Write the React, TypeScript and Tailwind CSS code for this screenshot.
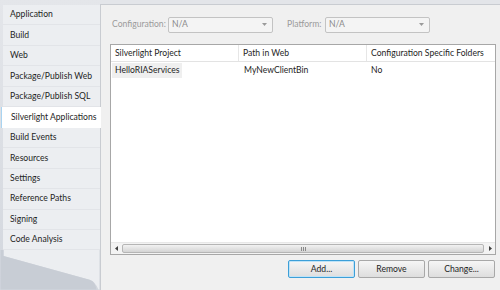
import React from "react";

const tabs = [
  "Application",
  "Build",
  "Web",
  "Package/Publish Web",
  "Package/Publish SQL",
  "Silverlight Applications",
  "Build Events",
  "Resources",
  "Settings",
  "Reference Paths",
  "Signing",
  "Code Analysis",
];

function Combo({ width }: { width: string }) {
  return (
    <div
      className={`${width} h-[16px] border border-[#c3c3c3] rounded-[2px] bg-[#f4f4f4] flex items-center justify-between pl-[3px] pr-[5px]`}
    >
      <span className="text-[#8a8a8a]">N/A</span>
      <svg width="5" height="3" viewBox="0 0 5 3">
        <path d="M0 0h5L2.5 3z" fill="#9a9a9a" />
      </svg>
    </div>
  );
}

function Button({ label, focused }: { label: string; focused?: boolean }) {
  return (
    <div
      className={`w-[67px] h-[18px] rounded-[2px] border flex items-center justify-center bg-gradient-to-b from-[#f6f6f6] to-[#dedede] text-[#1e1e1e] ${
        focused ? "border-[#3c9fd8] shadow-[inset_0_0_0_1px_#bfe3f7]" : "border-[#a8a8a8]"
      }`}
    >
      {label}
    </div>
  );
}

export default function App() {
  return (
    <div
      className="w-[500px] h-[290px] flex bg-[#e3e5e9] overflow-hidden text-[8.6px] leading-none"
      style={{ fontFamily: 'Lato, "Noto Sans", sans-serif' }}
    >
      {/* Side tabs */}
      <div className="w-[100px] flex flex-col pt-[5px] bg-gradient-to-b from-[#e4e6ea] to-[#d3d7de]">
        {tabs.map((t) => {
          const selected = t === "Silverlight Applications";
          return selected ? (
            <div
              key={t}
              className="h-[20.7px] ml-[1px] mr-[-1px] pl-[9px] flex items-center bg-white border-l border-[#a9d4f1] text-[#1e1e1e] relative z-10"
            >
              {t}
            </div>
          ) : (
            <div
              key={t}
              className="h-[20.7px] ml-[3px] pl-[7px] flex items-center bg-[#eceef1] border-b border-[#e2e4e8] text-[#1e1e1e]"
            >
              {t}
            </div>
          );
        })}
        <svg width="100" height="40" viewBox="0 0 100 40" className="block">
          <path d="M3 0H100V40H99Q96 32 90 30L3 6Z" fill="#eceef1" />
          <path d="M3 6L90 30Q96 32 97 40H0V0H3Z" fill="#c8cdd5" />
        </svg>
      </div>

      {/* Content */}
      <div className="flex-1 mt-[4px] border-t border-l border-[#c9ccd1] bg-[#f0f0f0] flex flex-col pl-[9px] pr-[4px]">
        <div className="h-[39px] flex items-center gap-[6px] pl-[2px]">
          <span className="text-[#9b9b9b] w-[50px]">Configuration:</span>
          <Combo width="w-[105px]" />
          <span className="text-[#9b9b9b] ml-[8px] w-[32px]">Platform:</span>
          <Combo width="w-[105px]" />
        </div>

        <div className="h-[211px] border border-[#a7a7a7] bg-white flex flex-col">
          <div className="h-[17px] flex border-b border-[#e3e3e3] text-[#1e1e1e]">
            <div className="w-[128px] pl-[4px] flex items-center border-r border-[#e6e6e6]">
              Silverlight Project
            </div>
            <div className="w-[128px] pl-[4px] flex items-center border-r border-[#e6e6e6]">
              Path in Web
            </div>
            <div className="flex-1 pl-[4px] flex items-center">
              Configuration Specific Folders
            </div>
          </div>
          <div className="h-[16px] flex text-[#1e1e1e]">
            <div className="w-[128px] pl-[1px] flex items-center">
              <span className="bg-[#efefef] h-[15px] px-[3px] flex items-center">
                HelloRIAServices
              </span>
            </div>
            <div className="w-[128px] pl-[5px] flex items-center">MyNewClientBin</div>
            <div className="flex-1 pl-[4px] flex items-center">No</div>
          </div>
          <div className="flex-1" />
          <div className="h-[12px] flex items-center bg-[#f3f3f3] border-t border-[#e8e8e8]">
            <div className="w-[10px] flex items-center justify-center">
              <svg width="3" height="5" viewBox="0 0 3 5">
                <path d="M3 0V5L0 2.5Z" fill="#404040" />
              </svg>
            </div>
            <div className="flex-1 h-[9px] mx-[1px] rounded-[2px] border border-[#b5b5b5] bg-gradient-to-b from-[#f2f2f2] to-[#d4d4d4] flex items-center justify-center">
              <div className="w-[5px] h-[4px] border-x border-[#8a8a8a] flex justify-center">
                <div className="w-[1px] h-full bg-[#8a8a8a]" />
              </div>
            </div>
            <div className="w-[10px] flex items-center justify-center">
              <svg width="3" height="5" viewBox="0 0 3 5">
                <path d="M0 0V5L3 2.5Z" fill="#404040" />
              </svg>
            </div>
          </div>
        </div>

        <div className="flex justify-end gap-[3px] mt-[5px] pr-[1px]">
          <Button label="Add..." focused />
          <Button label="Remove" />
          <Button label="Change..." />
        </div>
      </div>
    </div>
  );
}
